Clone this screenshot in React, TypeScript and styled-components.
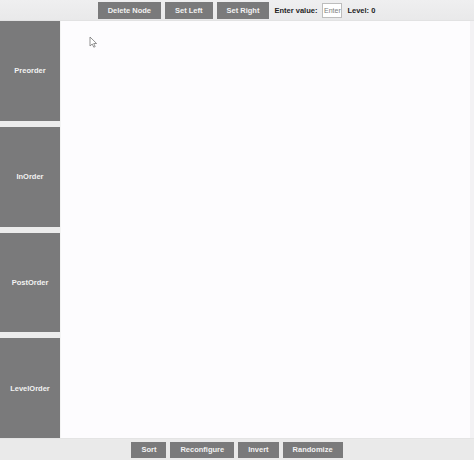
import styled, { createGlobalStyle } from 'styled-components';

const GlobalStyle = createGlobalStyle`
  html, body {
    margin: 0;
    padding: 0;
    background: #fdfcfe;
  }
  body {
    font-family: 'Liberation Sans', Arial, sans-serif;
  }
`;

const TOP_ACTIONS = ['Delete Node', 'Set Left', 'Set Right'];
const TRAVERSALS = ['Preorder', 'InOrder', 'PostOrder', 'LevelOrder'];
const BOTTOM_ACTIONS = ['Sort', 'Reconfigure', 'Invert', 'Randomize'];

export default function App() {
  return (
    <>
      <GlobalStyle />
      <Page>
        <Toolbar>
          {TOP_ACTIONS.map((label) => (
            <ActionButton key={label} $height={17}>
              {label}
            </ActionButton>
          ))}
          <Label>Enter value:</Label>
          <ValueInput placeholder="Enter" />
          <Label>Level: 0</Label>
        </Toolbar>
        <Body>
          <Sidebar>
            {TRAVERSALS.map((label) => (
              <TraversalButton key={label}>{label}</TraversalButton>
            ))}
          </Sidebar>
          <Canvas>
            {/* mouse pointer captured in the screenshot */}
            <Pointer width="9" height="12" viewBox="0 0 9 12">
              <path
                d="M1 1 L1 10 L3.2 8 L4.8 11.2 L6.2 10.6 L4.7 7.5 L7.6 7.5 Z"
                fill="#fff"
                stroke="#777"
                strokeWidth="0.8"
                strokeLinejoin="round"
              />
            </Pointer>
          </Canvas>
        </Body>
        <BottomBar>
          {BOTTOM_ACTIONS.map((label) => (
            <ActionButton key={label} $height={16}>
              {label}
            </ActionButton>
          ))}
        </BottomBar>
      </Page>
    </>
  );
}

const Page = styled.div`
  width: 474px;
  height: 460px;
  display: grid;
  grid-template-rows: 21px 1fr 22px;
  overflow: hidden;
`;

const Toolbar = styled.div`
  display: flex;
  align-items: center;
  justify-content: center;
  gap: 4px;
  background: linear-gradient(#efeff0, #e9e9ea);
  border-bottom: 1px solid #e2e2e3;
`;

const ActionButton = styled.button<{ $height: number }>`
  height: ${(p) => p.$height}px;
  padding: 0 10px;
  border: none;
  border-radius: 0;
  background: #7a7a7b;
  color: #f2f2f2;
  font-family: 'Liberation Sans', Arial, sans-serif;
  font-size: 7.5px;
  font-weight: 700;
  cursor: pointer;
`;

const Label = styled.span`
  font-size: 7.5px;
  font-weight: 700;
  color: #1e1e1e;
  white-space: nowrap;
  margin: 0 1px;
`;

const ValueInput = styled.input`
  width: 20px;
  height: 15px;
  box-sizing: border-box;
  padding: 0;
  border: 1px solid #bdbdbd;
  background: #fff;
  font-family: 'Liberation Sans', Arial, sans-serif;
  font-size: 7px;
  text-align: center;
  outline: none;

  &::placeholder {
    color: #7e7e7e;
  }
`;

const Body = styled.div`
  display: grid;
  grid-template-columns: 61px 1fr;
  min-height: 0;
`;

const Sidebar = styled.div`
  display: flex;
  flex-direction: column;
  gap: 6px;
  background: #ececec;
  border-right: 1px solid #f4f4f4;
`;

const TraversalButton = styled.button`
  flex: 1;
  border: none;
  border-radius: 0;
  background: #7a7a7b;
  color: #f2f2f2;
  font-family: 'Liberation Sans', Arial, sans-serif;
  font-size: 7.5px;
  font-weight: 700;
  cursor: pointer;
`;

const Canvas = styled.div`
  position: relative;
  background: #fdfcfe;
  border-right: 4px solid #f3f2f4;
`;

const Pointer = styled.svg`
  position: absolute;
  left: 28px;
  top: 15px;
`;

const BottomBar = styled.div`
  display: flex;
  align-items: center;
  justify-content: center;
  gap: 4px;
  background: #eaeaea;
  border-top: 1px solid #e4e4e4;
`;
